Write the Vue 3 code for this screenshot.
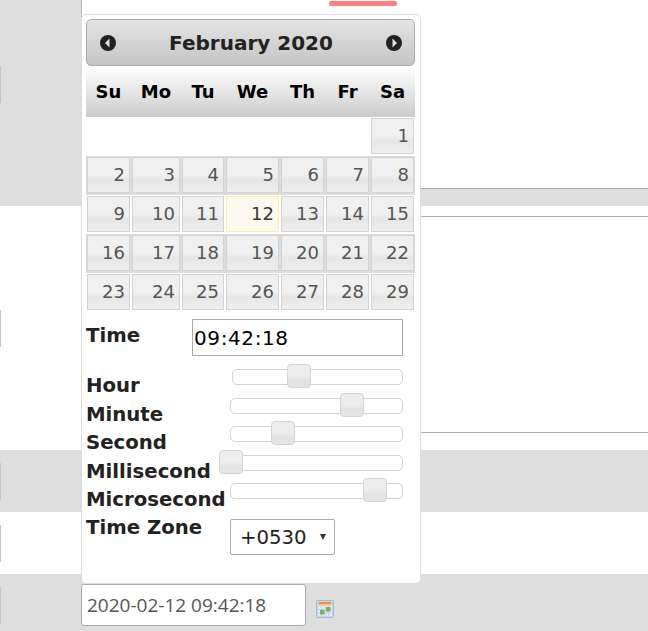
<template>
  <div class="page">
    <div class="row row-first gray">
      <div class="side pad-66"><span class="mark"></span></div>
      <div class="main first-main">
        <span class="pink-bar"></span>
        <div class="gray-strip"></div>
      </div>
    </div>
    <div class="row row-second">
      <div class="side pad-104"><span class="mark"></span></div>
      <div class="main second-main">
        <div class="ruled-box"></div>
      </div>
    </div>
    <div class="row short gray">
      <div class="side pad-13"><span class="mark"></span></div>
      <div class="main"></div>
    </div>
    <div class="row short">
      <div class="side pad-13"><span class="mark"></span></div>
      <div class="main"></div>
    </div>
    <div class="row last gray">
      <div class="side pad-13"><span class="mark"></span></div>
      <div class="main date-main">
        <input class="date-input" type="text" value="2020-02-12 09:42:18" />
        <svg class="cal-icon" width="18" height="18" viewBox="0 0 18 18">
          <rect x="0.5" y="0.5" width="17" height="17" rx="1" fill="#c5d6ee" stroke="#9dbbe3" />
          <rect x="2" y="2" width="14" height="14" fill="#e6ebf3" />
          <rect x="2.5" y="2" width="13" height="2.5" fill="#f5913c" />
          <rect x="2.5" y="4.5" width="13" height="1.5" fill="#f9c99a" />
          <path d="M2 9.5H16M2 13H16M5.5 6V16M9 6V16M12.5 6V16" stroke="#c3cfe0" stroke-width="1" />
          <rect x="4" y="10" width="4.5" height="4.5" fill="#6db665" />
          <rect x="10" y="7" width="4.5" height="4.5" fill="#6db665" />
        </svg>
      </div>
    </div>

    <div class="picker">
      <div class="picker-head">
        <svg width="16" height="16" viewBox="0 0 16 16">
          <circle cx="8" cy="8" r="8" fill="#222" />
          <path d="M9.5 3.5 L5 8 L9.5 12.5 Z" fill="#ddd" />
        </svg>
        <span class="month">February 2020</span>
        <svg width="16" height="16" viewBox="0 0 16 16">
          <circle cx="8" cy="8" r="8" fill="#222" />
          <path d="M6.5 3.5 L11 8 L6.5 12.5 Z" fill="#ddd" />
        </svg>
      </div>
      <table class="cal">
        <colgroup>
          <col v-for="(w, i) in colWidths" :key="i" :style="{ width: w + 'px' }" />
        </colgroup>
        <thead>
          <tr>
            <th v-for="d in days" :key="d">{{ d }}</th>
          </tr>
        </thead>
        <tbody>
          <tr v-for="(week, i) in weeks" :key="i" :class="{ odd: i % 2 === 1 }">
            <td v-for="(n, j) in week" :key="j">
              <span v-if="n" class="day" :class="{ today: n === 12 }">{{ n }}</span>
            </td>
          </tr>
        </tbody>
      </table>

      <div class="time-row">
        <span class="lbl time-lbl">Time</span>
        <input class="time-input" type="text" value="09:42:18" />
      </div>

      <div v-for="s in sliders" :key="s.name" class="slider-row">
        <span class="lbl slider-lbl">{{ s.name }}</span>
        <div class="track" :class="{ narrow: s.name === 'Hour' }">
          <span class="handle" :style="{ left: s.pos + 'px' }"></span>
        </div>
      </div>

      <div class="zone-row">
        <span class="lbl zone-lbl">Time Zone</span>
        <div class="zone-wrap">
          <select class="zone">
            <option>+0530</option>
          </select>
        </div>
      </div>
    </div>
  </div>
</template>

<script setup>
const days = ['Su', 'Mo', 'Tu', 'We', 'Th', 'Fr', 'Sa']
const colWidths = [45, 50, 44, 55, 45, 45, 45]
const weeks = [
  [0, 0, 0, 0, 0, 0, 1],
  [2, 3, 4, 5, 6, 7, 8],
  [9, 10, 11, 12, 13, 14, 15],
  [16, 17, 18, 19, 20, 21, 22],
  [23, 24, 25, 26, 27, 28, 29]
]
const sliders = [
  { name: 'Hour', pos: 54 },
  { name: 'Minute', pos: 109 },
  { name: 'Second', pos: 40 },
  { name: 'Millisecond', pos: -12 },
  { name: 'Microsecond', pos: 132 }
]
</script>

<style>
html,
body {
  margin: 0;
  overflow: hidden;
}
</style>

<style scoped>
.page {
  position: relative;
  width: 648px;
  height: 631px;
  overflow: hidden;
  font-family: "DejaVu Sans", Verdana, sans-serif;
  background: #fff;
}

.row {
  display: flex;
}

.gray {
  background: #dedede;
}

.row-first {
  height: 206px;
}

.row-second {
  height: 244px;
}

.short {
  height: 62px;
}

.last {
  height: 57px;
}

.side {
  width: 81px;
  flex: none;
  box-sizing: border-box;
}

.pad-66 {
  padding-top: 66px;
}

.pad-104 {
  padding-top: 104px;
}

.pad-13 {
  padding-top: 13px;
}

.mark {
  display: block;
  width: 1px;
  height: 37px;
  background: #c4c4c4;
}

.main {
  flex: 1;
}

.first-main {
  position: relative;
  display: flex;
  flex-direction: column;
  justify-content: flex-end;
  background: #fff;
  border-left: 1px solid #bbb;
}

.pink-bar {
  position: absolute;
  left: 247px;
  top: 1px;
  width: 68px;
  height: 5px;
  border-radius: 2px;
  background: #ff7f7f;
}

.gray-strip {
  height: 17px;
  background: #dedede;
  border-top: 1px solid #aaa;
}

.second-main {
  padding: 10px 0 17px;
  box-sizing: border-box;
}

.ruled-box {
  height: 100%;
  box-sizing: border-box;
  border-top: 1px solid #aaa;
  border-bottom: 1px solid #aaa;
}

.date-main {
  display: flex;
  align-items: flex-start;
  padding-top: 10px;
}

.date-input {
  width: 225px;
  height: 42px;
  box-sizing: border-box;
  padding: 0 5px;
  border: 1px solid #aaa;
  border-radius: 3px;
  background: #fff;
  color: #555;
  font-family: "Open Sans", sans-serif;
  font-size: 19px;
  outline: none;
}

.cal-icon {
  margin: 16px 0 0 10px;
}

.picker {
  position: absolute;
  left: 81px;
  top: 14px;
  width: 340px;
  height: 570px;
  box-sizing: border-box;
  padding: 4px;
  border: 1px solid #ddd;
  border-radius: 5px;
  background: #fff;
  color: #222;
}

.picker-head {
  display: flex;
  align-items: center;
  justify-content: space-between;
  width: 329px;
  height: 47px;
  box-sizing: border-box;
  padding: 0 12px 0 13px;
  border: 1px solid #aaa;
  border-radius: 5px;
  background: linear-gradient(#e4e4e4, #c4c4c4);
}

.month {
  font-size: 20px;
  font-weight: 700;
}

.cal {
  width: 329px;
  border-collapse: collapse;
  table-layout: fixed;
}

.cal th {
  height: 51px;
  padding: 0;
  background: linear-gradient(#fff, #ccc);
  color: #000;
  font-size: 18px;
  font-weight: 700;
}

.cal td {
  height: 39px;
  padding: 1px 1px 2px;
  box-sizing: border-box;
}

.cal tr.odd td {
  background: #ddd;
}

.day {
  display: block;
  height: 36px;
  box-sizing: border-box;
  padding: 0 4px 0 0;
  border: 1px solid #d3d3d3;
  background: linear-gradient(#f0f0f0 50%, #e6e6e6 65%, #efefef);
  color: #555;
  font-size: 18px;
  line-height: 34px;
  text-align: right;
}

.day.today {
  border-color: #fcefa1;
  background: #fbf9ee;
  color: #363636;
}

.lbl {
  font-size: 19.7px;
  font-weight: 700;
  line-height: 24px;
  white-space: nowrap;
}

.time-row {
  display: flex;
  justify-content: space-between;
  height: 54px;
  padding: 7px 13px 0 0;
}

.time-lbl {
  margin-top: 5px;
}

.slider-lbl {
  margin-top: 1px;
}

.time-input {
  width: 211px;
  height: 37px;
  box-sizing: border-box;
  padding: 0 1px;
  border: 1px solid #aaa;
  color: #000;
  font-family: "DejaVu Sans", sans-serif;
  font-size: 20px;
  letter-spacing: 0.6px;
  outline: none;
}

.slider-row {
  display: flex;
  justify-content: space-between;
  height: 28.5px;
  padding-right: 13px;
}

.track {
  position: relative;
  width: 173px;
  height: 16px;
  margin-top: -4px;
  box-sizing: border-box;
  border: 1px solid #d3d3d3;
  border-radius: 5px;
}

.track.narrow {
  width: 171px;
}

.handle {
  position: absolute;
  top: -6px;
  width: 24px;
  height: 24px;
  box-sizing: border-box;
  border: 1px solid #d3d3d3;
  border-radius: 4px;
  background: linear-gradient(#ededed 50%, #e2e2e2 70%, #e6e6e6);
}

.zone-row {
  display: flex;
  align-items: flex-start;
}

.zone-lbl {
  width: 144px;
}

.zone-wrap {
  position: relative;
  margin-top: 3.5px;
}

.zone-wrap::after {
  content: "";
  position: absolute;
  right: 9px;
  top: 15px;
  border-left: 3.5px solid transparent;
  border-right: 3.5px solid transparent;
  border-top: 6px solid #333;
  pointer-events: none;
}

.zone {
  display: block;
  width: 105px;
  height: 36px;
  box-sizing: border-box;
  padding: 0 4px 0 9px;
  border: 1px solid #aaa;
  border-radius: 2px;
  background: #fff;
  color: #222;
  font-family: "DejaVu Sans", sans-serif;
  font-size: 19.7px;
  outline: none;
  appearance: none;
}
</style>
